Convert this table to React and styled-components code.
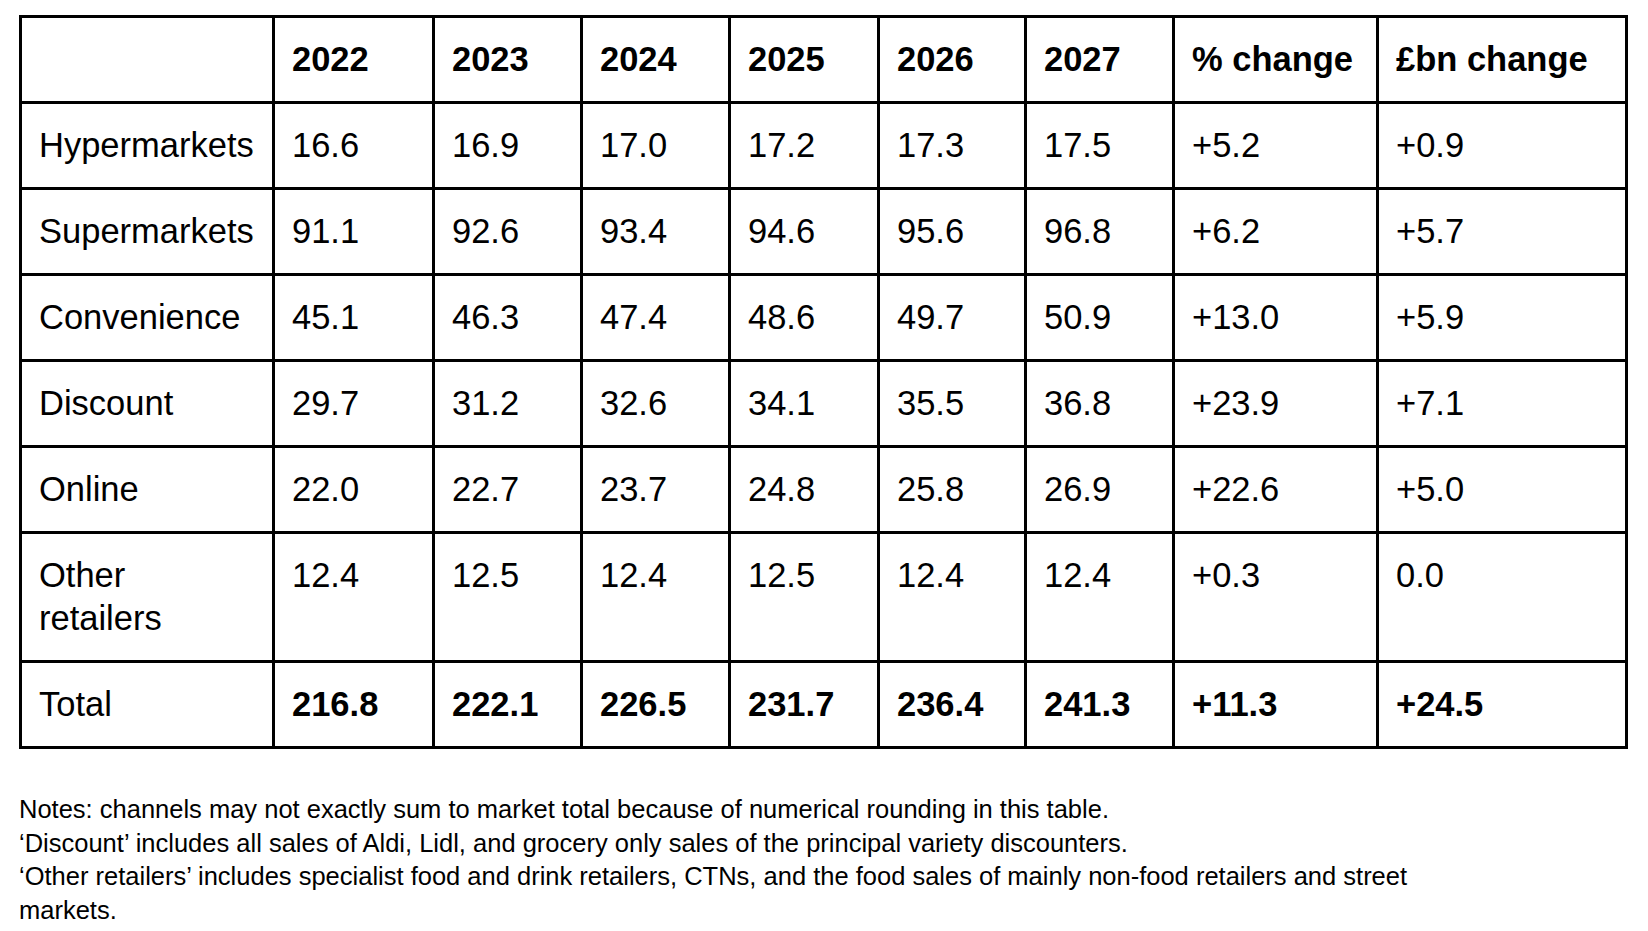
import React from 'react';
import styled, { createGlobalStyle } from 'styled-components';

const GlobalStyle = createGlobalStyle`
  body {
    margin: 0;
    background: #fff;
    font-family: "Liberation Sans", Arial, sans-serif;
    color: #000;
  }
`;

const Page = styled.div`
  padding: 15px 0 0 19px;
`;

const Table = styled.table`
  border-collapse: collapse;
  table-layout: fixed;
  width: 1609px;
  font-size: 34.5px;
  line-height: 43px;
`;

const Cell = styled.td`
  border: 3px solid #000;
  padding: 20px 10px 20px 17px;
  vertical-align: top;
  font-weight: ${(p) => (p.bold ? 700 : 400)};
  white-space: pre-line;
  text-align: left;
`;

const Notes = styled.div`
  margin-top: 44px;
  width: 1440px;
  font-size: 25.5px;
  line-height: 33.6px;
`;

const widths = [253, 160, 148, 148, 149, 147, 148, 204, 249];
const headers = ['', '2022', '2023', '2024', '2025', '2026', '2027', '% change', '£bn change'];

const rows = [
  ['Hypermarkets', '16.6', '16.9', '17.0', '17.2', '17.3', '17.5', '+5.2', '+0.9'],
  ['Supermarkets', '91.1', '92.6', '93.4', '94.6', '95.6', '96.8', '+6.2', '+5.7'],
  ['Convenience', '45.1', '46.3', '47.4', '48.6', '49.7', '50.9', '+13.0', '+5.9'],
  ['Discount', '29.7', '31.2', '32.6', '34.1', '35.5', '36.8', '+23.9', '+7.1'],
  ['Online', '22.0', '22.7', '23.7', '24.8', '25.8', '26.9', '+22.6', '+5.0'],
  ['Other\nretailers', '12.4', '12.5', '12.4', '12.5', '12.4', '12.4', '+0.3', '0.0'],
];

const total = ['Total', '216.8', '222.1', '226.5', '231.7', '236.4', '241.3', '+11.3', '+24.5'];

export default function App() {
  return (
    <Page>
      <GlobalStyle />
      <Table>
        <colgroup>
          {widths.map((w, i) => (
            <col key={i} style={{ width: w }} />
          ))}
        </colgroup>
        <tbody>
          <tr>
            {headers.map((h, i) => (
              <Cell key={i} bold>
                {h}
              </Cell>
            ))}
          </tr>
          {rows.map((r, ri) => (
            <tr key={ri}>
              {r.map((c, ci) => (
                <Cell key={ci}>{c}</Cell>
              ))}
            </tr>
          ))}
          <tr>
            {total.map((c, ci) => (
              <Cell key={ci} bold={ci > 0}>
                {c}
              </Cell>
            ))}
          </tr>
        </tbody>
      </Table>
      <Notes>
        Notes: channels may not exactly sum to market total because of numerical rounding in this table.
        <br />
        ‘Discount’ includes all sales of Aldi, Lidl, and grocery only sales of the principal variety discounters.
        <br />
        ‘Other retailers’ includes specialist food and drink retailers, CTNs, and the food sales of mainly non-food
        retailers and street markets.
      </Notes>
    </Page>
  );
}
